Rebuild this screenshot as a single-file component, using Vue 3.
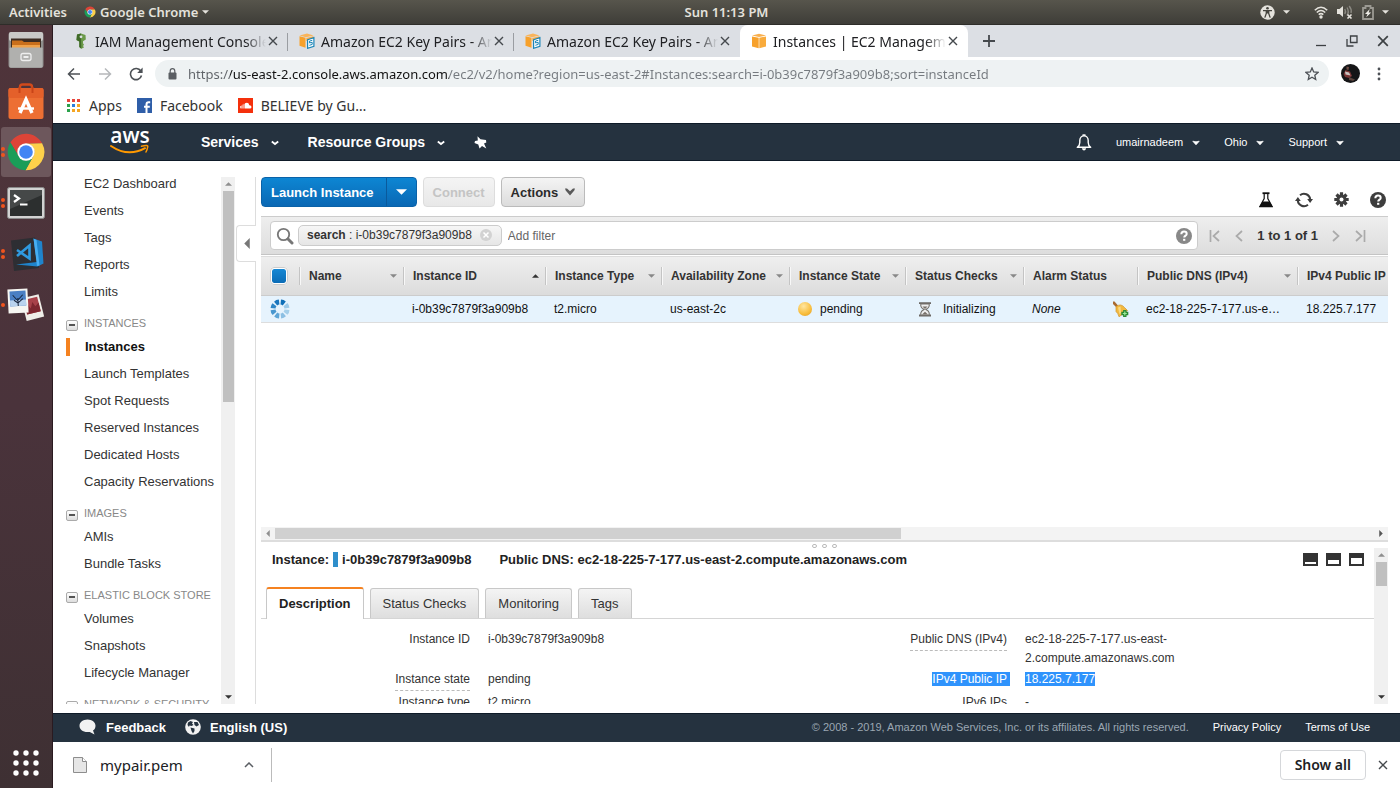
<script setup>
import { ref } from 'vue'

const tabs = [
  { title: 'IAM Management Console', icon: 'key' },
  { title: 'Amazon EC2 Key Pairs - Am', icon: 'docs' },
  { title: 'Amazon EC2 Key Pairs - Am', icon: 'docs' },
  { title: 'Instances | EC2 Management', icon: 'box', active: true }
]

const url = ref('https://us-east-2.console.aws.amazon.com/ec2/v2/home?region=us-east-2#Instances:search=i-0b39c7879f3a909b8;sort=instanceId')

const appColors = ['#e8453c', '#e8453c', '#e8453c', '#2ba24c', '#2a7de1', '#f5a623', '#2ba24c', '#f5a623', '#f5a623']

const groups = [
  { items: ['EC2 Dashboard', 'Events', 'Tags', 'Reports', 'Limits'] },
  { title: 'INSTANCES', items: ['Instances', 'Launch Templates', 'Spot Requests', 'Reserved Instances', 'Dedicated Hosts', 'Capacity Reservations'] },
  { title: 'IMAGES', items: ['AMIs', 'Bundle Tasks'] },
  { title: 'ELASTIC BLOCK STORE', items: ['Volumes', 'Snapshots', 'Lifecycle Manager'] },
  { title: 'NETWORK & SECURITY', items: [] }
]

const columns = [
  { key: 'name', label: 'Name', sort: 'down' },
  { key: 'id', label: 'Instance ID', sort: 'up' },
  { key: 'type', label: 'Instance Type', sort: 'down' },
  { key: 'zone', label: 'Availability Zone', sort: 'down' },
  { key: 'state', label: 'Instance State', sort: 'down' },
  { key: 'checks', label: 'Status Checks', sort: 'down' },
  { key: 'alarm', label: 'Alarm Status' },
  { key: 'dns', label: 'Public DNS (IPv4)', sort: 'down' },
  { key: 'ip', label: 'IPv4 Public IP' }
]

const spokes = ['#0f6fb8', '#9cc9e8', '#a5cfea', '#8cbfe3', '#5ea5d6', '#4997cf', '#2f86c6', '#1a76bd']
const checked = ref(true)
const filter = ref('')
const detailTabs = ['Description', 'Status Checks', 'Monitoring', 'Tags']
</script>

<template>
  <div class="desktop">
    <svg class="defs" aria-hidden="true">
      <defs>
        <symbol id="chrome" viewBox="0 0 48 48">
          <path fill="#dd4437" d="M24 14 43.3 13.5A22 22 0 0 0 5.3 12.5L15.3 29A10 10 0 0 1 24 14Z" />
          <path fill="#fdd04a" d="M32.7 29 23.4 46A22 22 0 0 0 43.3 13.5L24 14A10 10 0 0 1 32.7 29Z" />
          <path fill="#1a9d58" d="M15.3 29 5.3 12.5A22 22 0 0 0 23.4 46L32.7 29A10 10 0 0 1 15.3 29Z" />
          <circle cx="24" cy="24" r="10.4" fill="#fff" />
          <circle cx="24" cy="24" r="8.2" fill="#4285f4" />
        </symbol>
        <symbol id="close" viewBox="0 0 10 10"><path d="M1 1 9 9M9 1 1 9" stroke="currentColor" stroke-width="1.4" fill="none" /></symbol>
        <symbol id="caret" viewBox="0 0 8 6"><path d="M0.8 1.2Q4 2.4 7.2 1.2L4 4.8Z" fill="currentColor" stroke="currentColor" stroke-width=".8" stroke-linejoin="round" /></symbol>
        <symbol id="chev" viewBox="0 0 8 6"><path d="M0.8 1.500 4 4 7.200 1.500" fill="none" stroke="currentColor" stroke-width="1.800" /></symbol>
        <symbol id="tri-down" viewBox="0 0 8 4"><path d="M0 0H8L4 4Z" fill="currentColor" /></symbol>
        <symbol id="tri-up" viewBox="0 0 8 4"><path d="M0 4H8L4 0Z" fill="currentColor" /></symbol>
        <symbol id="tri-left" viewBox="0 0 4 8"><path d="M4 0V8L0 4Z" fill="currentColor" /></symbol>
        <symbol id="tri-right" viewBox="0 0 4 8"><path d="M0 0V8L4 4Z" fill="currentColor" /></symbol>
        <symbol id="help" viewBox="0 0 16 16">
          <circle cx="8" cy="8" r="8" fill="currentColor" />
          <path d="M5.3 6.2C5.4 4.4 6.5 3.6 8 3.6s2.7 1 2.7 2.3C10.700 7.600 8.200 7.700 8.200 9.600" fill="none" stroke="#fff" stroke-width="2" />
          <rect x="7.100" y="10.800" width="2.200" height="2" fill="#fff" />
        </symbol>
        <symbol id="key" viewBox="0 0 16 16">
          <path fill="#6b9a4a" d="M8 0.500 4 1.500 3.500 7 6.300 8.500V14l2 1.700 2.700-1.200-1-1.600 1-1.200-1-1.400V8.200L12.800 6.500 12.500 2Z" />
          <path fill="#3f6a28" d="M8 0.500 4 1.500 3.500 7 6.300 8.500V14l2 1.700Z" />
          <circle cx="8" cy="3.800" r="1.400" fill="#dcdfe4" />
        </symbol>
        <symbol id="box" viewBox="0 0 16 16">
          <path fill="#f9b04f" d="M1 2.600 8 0.800 15 2.600 8 4Z" />
          <path fill="#f7a12b" d="M1 3.400 7.700 4.700V15.300L1 13.500Z" />
          <path fill="#f9ab3c" d="M15 3.400 8.300 4.700V15.300L15 13.500Z" />
        </symbol>
        <symbol id="docs" viewBox="0 0 16 16">
          <path fill="#f9b45a" d="M0.500 2.600 8 0.500 14.500 2.400 7 4.300Z" />
          <path fill="#f7a12b" d="M0.500 3.300 6.500 4.800V14.800L0.500 12.800Z" />
          <path fill="#f9ab45" d="M7.300 5 14.500 3.200V6L7.300 8Z" />
          <path fill="#fff" stroke="#1b86b8" stroke-width="1.200" d="M8.600 6.800 14.900 4.700V13.400L8.600 15.300Z" />
          <path fill="none" stroke="#1b86b8" stroke-width="1" d="M13.300 7.300 10.500 8.100V9.900L13.200 9.300V11.400L10.400 12.300" />
        </symbol>
      </defs>
    </svg>

    <header class="topbar">
      <div class="topbar-side left">
        <button class="top-btn">Activities</button>
        <button class="top-btn app-btn">
          <svg class="i12"><use href="#chrome" /></svg>Google Chrome
          <svg class="top-tri"><use href="#tri-down" /></svg>
        </button>
      </div>
      <button class="top-btn clock">Sun 11:13 PM</button>
      <div class="topbar-side tray">
        <svg width="15" height="15" viewBox="0 0 15 15"><circle cx="7.500" cy="7.500" r="7.200" fill="#e4e2dc" /><circle cx="7.500" cy="3.200" r="1.300" fill="#45443e" /><path d="M3 5.600H12M7.500 5.500V8.500M6.300 6V8.500L4.800 12.600M8.700 6V8.500L10.200 12.600" stroke="#45443e" stroke-width="1.300" fill="none" /></svg>
        <svg class="top-tri"><use href="#tri-down" /></svg>
        <svg class="wifi" width="14" height="13" viewBox="0 0 14 13"><g fill="none" stroke="#e4e2dc" stroke-width="1.600"><path d="M0.800 4.300Q7-1.800 13.200 4.300" /><path d="M2.800 6.500Q7 2.500 11.200 6.500" /><path d="M4.700 8.600Q7 6.500 9.300 8.600" /></g><circle cx="7" cy="11" r="1.700" fill="#e4e2dc" /></svg>
        <svg class="vol" width="16" height="14" viewBox="0 0 16 14"><path fill="#e4e2dc" d="M0 4H2.500L6 1V12L2.500 9H0Z" /><g fill="none" stroke="#8b8982" stroke-width="1.400"><path d="M7.800 4Q9.300 6.500 7.800 9M10 2.500Q12.500 6.500 10 10.500M12.200 1Q15 4.500 14 8" /></g><path d="M10.500 9.500 14.500 13.500M14.500 9.500 10.500 13.500" stroke="#e4e2dc" stroke-width="1.600" /></svg>
        <svg class="bat" width="12" height="15" viewBox="0 0 12 15"><path fill="none" stroke="#9b9992" stroke-width="1.800" d="M1 3H3.500V1H8.500V3H11V14H1Z" /><path fill="#f0eee8" d="M7.800 4 3 9H5.500L4.200 12.300 9.200 7.600H6.600Z" /></svg>
        <svg class="top-tri"><use href="#tri-down" /></svg>
      </div>
    </header>

    <nav class="launcher" aria-label="Launcher">
      <button class="dock" aria-label="Files">
        <svg width="36" height="38" viewBox="0 0 36 38"><rect x="0.500" y="1" width="35" height="36" rx="3" fill="#8e8e8c" /><rect x="1" y="1" width="34" height="9" rx="2" fill="#c9c9c7" /><rect x="3" y="7.500" width="30" height="10" fill="#3c2c22" /><path fill="#c96f1c" d="M4 9.500H14L16 11H32V17H4Z" /><path fill="#f0a24a" d="M4 14H32V17H4Z" /><rect x="1.500" y="16.500" width="33" height="20" rx="1" fill="#b0b0ae" /><rect x="13" y="22.500" width="10" height="7" rx="2" fill="none" stroke="#eee" stroke-width="1.300" /><rect x="15.500" y="25" width="5" height="2" fill="#eee" /></svg>
      </button>
      <button class="dock" aria-label="Software">
        <svg width="36" height="38" viewBox="0 0 36 38"><path d="M12 11V5Q12 2.500 14.500 2.500H21.500Q24 2.500 24 5V11" fill="none" stroke="#d24a1b" stroke-width="2.400" /><rect x="0.500" y="6" width="35" height="31" rx="2" fill="#ed6f33" /><rect x="0.500" y="6" width="35" height="10" rx="2" fill="#e4602a" /><path d="M11.500 5V11M24.500 5V11" stroke="#c94418" stroke-width="2" /><path d="M12 31 18 17.500 24 31" fill="none" stroke="#fff" stroke-width="3.400" /><path d="M10 26.500H26" stroke="#fff" stroke-width="2.400" /></svg>
      </button>
      <button class="dock current" aria-label="Google Chrome"><span class="pips"><i></i><i></i></span><svg width="40" height="40"><use href="#chrome" /></svg></button>
      <button class="dock" aria-label="Terminal"><span class="pips"><i></i><i></i></span>
        <svg width="38" height="32" viewBox="0 0 38 32"><rect x="0.500" y="0.500" width="37" height="31" rx="2" fill="#d2d2d2" stroke="#8a8a8a" /><rect x="3" y="3" width="32" height="26" fill="#2c2f2f" /><path fill="#454848" d="M3 3H35V8L3 22Z" /><path d="M7 8 12 11.500 7 15" fill="none" stroke="#fff" stroke-width="2.200" /><path d="M13 17.500H20.500" stroke="#fff" stroke-width="2" /></svg>
      </button>
      <button class="dock" aria-label="Visual Studio Code"><span class="pips"><i></i><i></i></span>
        <svg width="36" height="36" viewBox="0 0 36 36"><path fill="#2d2e33" d="M3 4.500 27 1.500 31 32 6 35Z" /><path fill="#1f84cc" d="M25.500 2.500 34 5.500 35.500 27.500 29.500 30.500Z" /><path fill="#1f84cc" d="M8 28.500 29 26 29.500 30.500Z" /><path fill="#47aef2" d="M25.500 2.500 28.500 4 31.500 29.500 29 30Z" /><path fill="none" stroke="#2f9ae0" stroke-width="2.600" d="M9 14 21.500 22.500V9.500L9 20" /></svg>
      </button>
      <button class="dock" aria-label="Photos"><span class="pips"><i></i></span>
        <svg width="38" height="36" viewBox="0 0 38 36"><g transform="rotate(-14 26 22)"><rect x="17" y="9" width="18" height="23" fill="#efeee8" /><rect x="19" y="11" width="14" height="15" fill="#a8424a" /><path fill="#7d2730" d="M19 22 22 17 24 21 27 15 29 20 33 17V26H19Z" /></g><g transform="rotate(-3 11 14)"><rect x="1" y="2" width="20" height="24" fill="#f6f6f2" /><rect x="3" y="4" width="16" height="15" fill="#4a7fc4" /><path fill="#b9d3ee" d="M3 13H19V19H3Z" /><path stroke="#16233a" stroke-width="1" fill="none" d="M11 19V11M11 14 6 8M11 13 16 8M11 16 16 12M11 16 7 13" /></g></svg>
      </button>
      <button class="dock apps" aria-label="Show Applications">
        <svg width="26" height="26" viewBox="0 0 26 26" fill="#fff"><template v-for="r in 3" :key="r"><circle v-for="c in 3" :key="c" :cx="c * 10 - 7" :cy="r * 10 - 7" r="2.700" /></template></svg>
      </button>
    </nav>

    <div class="window">
      <div class="tabstrip">
        <div v-for="(t, n) in tabs" :key="n" class="tab" :class="{ active: t.active }">
          <svg class="i16"><use :href="'#' + t.icon" /></svg>
          <a href="#" class="tab-title">{{ t.title }}</a>
          <button class="x" aria-label="Close tab"><svg class="i10"><use href="#close" /></svg></button>
        </div>
        <button class="x plus" aria-label="New tab"><svg width="12" height="12" viewBox="0 0 12 12"><path d="M6 0V12M0 6H12" stroke="currentColor" stroke-width="1.800" /></svg></button>
        <div class="win-ctl">
          <button aria-label="Minimize"><svg width="12" height="12" viewBox="0 0 12 12"><path d="M1 10.500H11" stroke="currentColor" stroke-width="1.300" /></svg></button>
          <button aria-label="Restore"><svg width="12" height="12" viewBox="0 0 12 12"><path d="M4.500 1H11V7.500H4.500ZM1 4V11H7.500" fill="none" stroke="currentColor" stroke-width="1.300" /></svg></button>
          <button aria-label="Close"><svg class="i12"><use href="#close" /></svg></button>
        </div>
      </div>

      <div class="toolbar">
        <button aria-label="Back"><svg width="14" height="14" viewBox="0 0 14 14"><path d="M13 7H1.500M7 1.500 1.500 7 7 12.500" fill="none" stroke="#4d5156" stroke-width="1.500" /></svg></button>
        <button aria-label="Forward"><svg width="14" height="14" viewBox="0 0 14 14"><path d="M1 7H12.500M7 1.500 12.500 7 7 12.500" fill="none" stroke="#b6b8bb" stroke-width="1.500" /></svg></button>
        <button aria-label="Reload"><svg width="14" height="14" viewBox="0 0 14 14"><path d="M11.800 4A5.600 5.600 0 1 0 12.500 8.500" fill="none" stroke="#4d5156" stroke-width="1.600" /><path fill="#4d5156" d="M13.600 0.500V6H8.200Z" /></svg></button>
        <div class="omnibox">
          <svg width="9" height="12" viewBox="0 0 9 12"><rect x="0.500" y="4.500" width="8" height="7" rx="1" fill="#5a5e63" /><path d="M2.200 5V3A2.300 2.300 0 0 1 6.800 3V5" fill="none" stroke="#5a5e63" stroke-width="1.200" /></svg>
          <input v-model="url" class="url" aria-label="Address" spellcheck="false">
          <button aria-label="Bookmark this page"><svg width="14" height="14" viewBox="0 0 14 14"><path d="M7 1 8.700 5 13 5.400 9.800 8.200 10.700 12.500 7 10.200 3.300 12.500 4.200 8.200 1 5.400 5.300 5Z" fill="none" stroke="#4d5156" stroke-width="1.300" /></svg></button>
        </div>
        <button class="avatar" aria-label="Profile"><svg width="19" height="19" viewBox="0 0 19 19"><circle cx="9.500" cy="9.500" r="9.500" fill="#151517" /><path fill="#6e4a42" d="M5.500 2.500 8 3 7.500 6 5.500 5.500Z" /><path fill="#7a3434" d="M2.500 10 4.500 6 9 7.500 11 12 8 14 4 13Z" /><path fill="#c9c3c0" d="M4 7.500 8 8.500 9.500 11.500 4.500 10.500Z" /><path fill="#59423c" d="M8 13 14 15.500 12 17 8 16Z" /></svg></button>
        <button aria-label="Menu"><svg width="4" height="14" viewBox="0 0 4 14" fill="#4d5156"><circle cx="2" cy="2" r="1.400" /><circle cx="2" cy="7" r="1.400" /><circle cx="2" cy="12" r="1.400" /></svg></button>
      </div>

      <div class="bookmarks">
        <a href="#"><svg width="14" height="14" viewBox="0 0 14 14"><rect v-for="(c, n) in appColors" :key="n" :x="(n % 3) * 5" :y="Math.floor(n / 3) * 5" width="3" height="3" :fill="c" /></svg>Apps</a>
        <a href="#"><svg width="15" height="15" viewBox="0 0 15 15"><rect width="15" height="15" fill="#2f5ea8" /><path d="M9.500 15V6.500Q9.500 4.300 11.700 4.300H13.200M7 8.700H12.800" fill="none" stroke="#fff" stroke-width="2" /></svg>Facebook</a>
        <a href="#"><svg width="15" height="15" viewBox="0 0 15 15"><rect width="15" height="15" fill="#f4300c" /><path fill="#fff" d="M7 10.500V5.300Q10.600 3.800 11.300 7.300 13.500 7.200 13.500 9 13.400 10.500 12 10.500Z" /><path stroke="#fff" stroke-width=".8" d="M6.200 10.500V5.800M5 10.500V6.500M3.800 10.500V7.500M2.600 10.300V8" /></svg>BELIEVE by Gu…</a>
      </div>

      <div class="awsnav">
        <a href="#" class="logo">aws<svg width="40" height="11" viewBox="0 0 40 11"><path d="M1 2Q18 13.500 35 4.200" fill="none" stroke="#f90" stroke-width="2" stroke-linecap="round" /><path d="M31.500 2.300Q38.500 0.500 37.700 3 37.300 5.500 36 8" fill="none" stroke="#f90" stroke-width="1.500" stroke-linecap="round" /></svg></a>
        <button class="nav-main">Services<svg class="caret"><use href="#chev" /></svg></button>
        <button class="nav-main">Resource Groups<svg class="caret"><use href="#chev" /></svg></button>
        <button class="pin" aria-label="Pin"><svg width="13" height="13" viewBox="0 0 13 13"><path fill="#fff" d="M3.500 0.300 6.500 3.300 12 4 12.300 6.500 10 7.500 12.300 12.500 8 10 5.500 12.500 4.300 8.500 0.500 7 1 5 3.800 4.500Z" /></svg></button>
        <button class="bell" aria-label="Notifications"><svg width="16" height="17" viewBox="0 0 16 17"><path d="M1.300 13.300H14.700Q12.200 11.700 12.200 8.500V6.500A4.200 4.700 0 0 0 3.800 6.500V8.500Q3.800 11.700 1.300 13.300Z" fill="none" stroke="#fff" stroke-width="1.400" stroke-linejoin="round" /><path d="M6.500 1H9.500" stroke="#fff" stroke-width="1.400" /><path d="M5.800 14.200H10.200Q9.500 16.500 8 16.500T5.800 14.200Z" fill="#fff" /></svg></button>
        <button>umairnadeem<svg class="caret"><use href="#caret" /></svg></button>
        <button>Ohio<svg class="caret"><use href="#caret" /></svg></button>
        <button>Support<svg class="caret"><use href="#caret" /></svg></button>
      </div>

      <div class="console">
        <aside class="side">
          <nav class="side-list" aria-label="EC2">
            <section v-for="(g, n) in groups" :key="n">
              <h3 v-if="g.title"><button aria-label="Collapse"><span></span></button>{{ g.title }}</h3>
              <ul v-if="g.items.length">
                <li v-for="it in g.items" :key="it" :class="{ here: it === 'Instances' }"><a href="#">{{ it }}</a></li>
              </ul>
            </section>
          </nav>
          <div class="vbar"><svg class="tri-v dim"><use href="#tri-up" /></svg><span class="thumb side-thumb"></span><svg class="tri-v end"><use href="#tri-down" /></svg></div>
          <div class="divider"><button class="handle" aria-label="Hide navigation"><svg width="6" height="11"><use href="#tri-left" /></svg></button></div>
        </aside>

        <main class="main">
          <div class="actions">
            <div class="split"><button>Launch Instance</button><button class="drop" aria-label="More launch options"><svg width="11" height="6"><use href="#tri-down" /></svg></button></div>
            <button class="btn" disabled>Connect</button>
            <button class="btn act">Actions<svg width="10" height="8" viewBox="0 0 10 8"><path fill="#5a5a5a" d="M0 0.500 2 0.500 5 3.300 8 0.500 10 0.500 9.300 2.500 5 7.500 0.700 2.500Z" /></svg></button>
            <div class="tools">
              <button aria-label="Experiments"><svg width="16" height="16" viewBox="0 0 16 16"><path d="M4.500 1.200H11.500" stroke="#111" stroke-width="1.800" /><path d="M6.200 1.500V6.500L2 14.300H14L9.800 6.500V1.500" fill="none" stroke="#111" stroke-width="1.200" /><path fill="#111" d="M4.500 9.500H11.500L15 15.300H1Z" /></svg></button>
              <button aria-label="Refresh"><svg width="18" height="16" viewBox="0 0 18 16"><path d="M5 3.200A6.200 6.200 0 0 1 15.200 7.500M13 12.800A6.200 6.200 0 0 1 2.800 8.500" fill="none" stroke="#3d3d3d" stroke-width="2" /><path fill="#3d3d3d" d="M0 9H5.800L2.900 5ZM18 7H12.200L15.100 11Z" /></svg></button>
              <button aria-label="Settings"><svg width="15" height="15" viewBox="0 0 15 15"><g stroke="#3d3d3d" stroke-width="3.200"><path d="M7.500 0.300V14.700M0.300 7.500H14.700M2.500 2.500 12.500 12.500M12.500 2.500 2.500 12.500" /></g><circle cx="7.500" cy="7.500" r="5" fill="#3d3d3d" /><circle cx="7.500" cy="7.500" r="2" fill="#fff" /></svg></button>
              <button aria-label="Help"><svg class="i16 dark"><use href="#help" /></svg></button>
            </div>
          </div>

          <div class="filterbar">
            <div class="search">
              <svg width="18" height="18" viewBox="0 0 18 18"><circle cx="7.500" cy="7.500" r="5.700" fill="none" stroke="#777" stroke-width="1.800" /><path d="M12 12 16 16" stroke="#777" stroke-width="3" stroke-linecap="round" /></svg>
              <span class="chip"><span><b>search</b> : i-0b39c7879f3a909b8</span><button aria-label="Remove filter"><svg width="12" height="12" viewBox="0 0 12 12"><circle cx="6" cy="6" r="6" fill="#d2d2d2" /><path d="M3.500 3.500 8.500 8.500M8.500 3.500 3.500 8.500" stroke="#fff" stroke-width="1.500" /></svg></button></span>
              <input v-model="filter" placeholder="Add filter" aria-label="Add filter">
              <button aria-label="Filter help"><svg class="i16 grey"><use href="#help" /></svg></button>
            </div>
            <div class="pager">
              <button aria-label="First page"><svg width="12" height="12" viewBox="0 0 12 12"><path d="M1.500 0V12M10 1 4.500 6 10 11" fill="none" stroke="#aaa" stroke-width="1.700" /></svg></button>
              <button aria-label="Previous page"><svg width="8" height="12" viewBox="0 0 8 12"><path d="M7 1 1.500 6 7 11" fill="none" stroke="#aaa" stroke-width="1.700" /></svg></button>
              <b>1 to 1 of 1</b>
              <button aria-label="Next page"><svg width="8" height="12" viewBox="0 0 8 12"><path d="M1 1 6.500 6 1 11" fill="none" stroke="#aaa" stroke-width="1.700" /></svg></button>
              <button aria-label="Last page"><svg width="12" height="12" viewBox="0 0 12 12"><path d="M10.500 0V12M2 1 7.500 6 2 11" fill="none" stroke="#aaa" stroke-width="1.700" /></svg></button>
            </div>
          </div>

          <div class="grid-area">
            <table>
              <colgroup><col class="c-check"><col v-for="c in columns" :key="c.key" :class="'c-' + c.key"></colgroup>
              <thead>
                <tr>
                  <th class="check"><input v-model="checked" type="checkbox" aria-label="Select all"></th>
                  <th v-for="c in columns" :key="c.key"><div class="th">{{ c.label }}<svg v-if="c.sort" :class="c.sort"><use :href="'#tri-' + c.sort" /></svg></div></th>
                </tr>
              </thead>
              <tbody>
                <tr>
                  <td class="check"><svg width="20" height="20" viewBox="0 0 20 20"><path v-for="(c, n) in spokes" :key="n" :fill="c" :transform="'rotate(' + (n * 45 + 22) + ' 10 10)'" d="M7.400 0.900Q10-0.200 12.600 0.900L11.200 5.700Q10 5.300 8.800 5.700Z" /></svg></td>
                  <td></td>
                  <td>i-0b39c7879f3a909b8</td>
                  <td>t2.micro</td>
                  <td>us-east-2c</td>
                  <td><div class="cell"><span class="dot"></span>pending</div></td>
                  <td><div class="cell wait"><svg width="12" height="15" viewBox="0 0 12 15"><path d="M0 1.200H12M0 13.500H12" stroke="#6a6763" stroke-width="1.800" /><path d="M1.800 2V4Q2 6 5 7.500 2 9 1.800 11V13H10.200V11Q10 9 7 7.500 10 6 10.200 4V2Z" fill="#eee" stroke="#76736f" stroke-width="1.100" /><path fill="#77706a" d="M3.500 4.500H8.500L6 7ZM3 12.500 6 9.800 9 12.500Z" /></svg>Initializing</div></td>
                  <td><div class="cell alarm"><i>None</i><svg width="17" height="17" viewBox="0 0 17 17"><path fill="#a86a30" d="M1 0.500 2.500 0.500 6 4.500 4.500 6.500 1 3Z" /><path fill="#f2b93f" stroke="#cf922a" stroke-width=".7" d="M4 5.500Q9 2 12.500 6.500L15.500 9.500 7 15.800Q6 12 4 10.500Z" /><path fill="#f9d985" d="M6 6.500 8.500 5.500 9 12 7.500 13Z" /><path d="M12.800 9V16M9.300 12.500H16.300" stroke="#2a8a34" stroke-width="3.400" /><path d="M12.800 10.500V14.500M10.800 12.500H14.800" stroke="#9be898" stroke-width="1.200" /></svg></div></td>
                  <td>ec2-18-225-7-177.us-e…</td>
                  <td>18.225.7.177</td>
                </tr>
              </tbody>
            </table>
          </div>

          <div class="hbar"><svg class="tri-h dim"><use href="#tri-left" /></svg><span></span><svg class="tri-h end"><use href="#tri-right" /></svg></div>

          <section class="detail">
            <div class="grip"><i></i><i></i><i></i></div>
            <div class="detail-body">
              <div class="detail-head">
                <b class="inst">Instance: <span></span> i-0b39c7879f3a909b8</b>
                <b>Public DNS: ec2-18-225-7-177.us-east-2.compute.amazonaws.com</b>
                <div class="panes"><button class="p1" aria-label="Small pane"></button><button class="p2" aria-label="Medium pane"></button><button class="p3" aria-label="Large pane"></button></div>
              </div>
              <div class="dtabs">
                <button v-for="(t, n) in detailTabs" :key="t" :class="{ on: n === 0 }">{{ t }}</button>
              </div>
              <div class="props">
                <dl>
                  <div class="tall"><dt><span>Instance ID</span></dt><dd>i-0b39c7879f3a909b8</dd></div>
                  <div><dt><span class="tip">Instance state</span></dt><dd>pending</dd></div>
                  <div><dt><span>Instance type</span></dt><dd>t2.micro</dd></div>
                </dl>
                <dl>
                  <div class="tall"><dt><span class="tip">Public DNS (IPv4)</span></dt><dd>ec2-18-225-7-177.us-east-<wbr>2.compute.amazonaws.com</dd></div>
                  <div><dt class="picked"><mark>IPv4 Public IP</mark></dt><dd><mark>18.225.7.177</mark></dd></div>
                  <div><dt><span>IPv6 IPs</span></dt><dd>-</dd></div>
                </dl>
              </div>
            </div>
            <div class="vbar"><svg class="tri-v dim"><use href="#tri-up" /></svg><span class="thumb detail-thumb"></span><svg class="tri-v end"><use href="#tri-down" /></svg></div>
          </section>
        </main>
      </div>

      <footer class="foot">
        <button><svg width="18" height="16" viewBox="0 0 18 16"><path fill="#f2f2f2" d="M8.500 0.500C13 0.500 16.500 3.300 16.500 6.700 16.500 9 15.500 10.500 14 11.600L15.500 15.500 10.800 12.900C4.500 14 0.500 10.500 0.500 6.700 0.500 3.300 4 0.500 8.500 0.500Z" /></svg>Feedback</button>
        <button class="lang"><svg width="16" height="16" viewBox="0 0 16 16"><circle cx="8" cy="8" r="7.800" fill="#f2f2f2" /><path fill="#25323f" d="M3 3.500 5.500 2 8 3 7 4.500 8.500 6 6.500 7 4.500 6.500 4 8 2.500 6ZM9 3 12.500 3 14 6 11.500 7.500 9.500 6ZM5.500 8.500 9.500 9.500 9.500 12 8 14.500 6.500 12Z" /></svg>English (US)</button>
        <span class="copy">© 2008 - 2019, Amazon Web Services, Inc. or its affiliates. All rights reserved.</span>
        <a href="#">Privacy Policy</a>
        <a href="#">Terms of Use</a>
      </footer>

      <div class="downloads">
        <button class="dl-item">
          <svg width="14" height="16" viewBox="0 0 14 16"><path fill="#e6e6e6" stroke="#8d8d8d" d="M0.500 0.500H9.500L13.500 4.500V15.500H0.500Z" /><path fill="#fff" stroke="#8d8d8d" d="M9.500 0.500V4.500H13.500" /></svg>
          <span>mypair.pem</span>
          <svg width="10" height="6" viewBox="0 0 10 6"><path d="M1 5 5 1 9 5" fill="none" stroke="#5a5e63" stroke-width="1.500" /></svg>
        </button>
        <button class="show">Show all</button>
        <button class="x" aria-label="Close downloads"><svg class="i10"><use href="#close" /></svg></button>
      </div>
    </div>
  </div>
</template>

<style>
body { margin: 0; background: #fff; }
</style>

<style scoped>
* { box-sizing: border-box; }
button { border: 0; padding: 0; margin: 0; background: none; font: inherit; color: inherit; display: flex; align-items: center; }
a { color: inherit; text-decoration: none; }
ul, dl, dd, h3 { margin: 0; padding: 0; list-style: none; }
input { font: inherit; color: inherit; border: 0; background: none; padding: 0; margin: 0; outline: 0; min-width: 0; }
svg { flex: none; display: block; }
.defs { position: absolute; width: 0; height: 0; }
.i10 { width: 10px; height: 10px; }
.i12 { width: 12px; height: 12px; }
.i16 { width: 16px; height: 16px; }
.dark { color: #3d3d3d; }
.grey { color: #888; }

.desktop { display: grid; grid-template-columns: 53px minmax(0, 1fr); grid-template-rows: 25px minmax(0, 1fr); height: 100vh; overflow: hidden; font-family: "Noto Sans", "Open Sans", sans-serif; font-size: 14px; color: #333; }

.topbar { grid-column: 1 / 3; display: flex; align-items: center; justify-content: space-between; background: linear-gradient(#57554c, #3e3d38); border-bottom: 1px solid #2e2d29; color: #e4e2dc; font-size: 13px; font-weight: 600; }
.topbar-side { flex: 1 1 0; display: flex; align-items: center; padding: 0 11px 0 9px; }
.topbar-side.left { flex-basis: 73px; }
.top-btn { white-space: nowrap; }
.app-btn { margin-left: 17px; gap: 4px; }
.top-tri { width: 7px; height: 4px; }
.tray { justify-content: flex-end; }
.tray .top-tri { margin-left: 8px; }
.wifi { margin-left: 24px; }
.vol { margin-left: 9px; }
.bat { margin-left: 9px; }

.launcher { background: linear-gradient(#4f343a, #4a333b 50%, #3e3033); border-right: 1px solid #2a1a20; display: flex; flex-direction: column; gap: 1px; }
.dock { position: relative; height: 50px; justify-content: center; margin: 0 1px; border-radius: 3px; }
.current { background: #6d575c; }
.apps { margin-top: auto; }
.pips { position: absolute; left: 0; display: flex; flex-direction: column; gap: 2px; }
.pips i { width: 4px; height: 4px; border-radius: 50%; background: #f0541e; }

.window { display: flex; flex-direction: column; min-width: 0; min-height: 0; background: #fff; }
.tabstrip { display: flex; height: 32px; background: #dcdfe4; padding-left: 9px; color: #202124; }
.tab { position: relative; display: flex; align-items: center; width: 226px; padding: 0 10px 0 11px; border-radius: 8px 8px 0 0; }
.tab:nth-child(-n+2)::after { content: ""; position: absolute; right: 0; top: 8px; height: 18px; border-right: 1px solid #9a9da2; }
.tab.active { width: 228px; background: #fff; }
.tab-title { flex: 1; margin-left: 6px; overflow: hidden; white-space: nowrap; -webkit-mask-image: linear-gradient(90deg, #000 88%, transparent); mask-image: linear-gradient(90deg, #000 88%, transparent); }
.x { color: #45494d; margin-left: 2px; }
.plus { margin-left: 15px; }
.win-ctl { display: flex; margin-left: auto; gap: 19px; padding-right: 11px; color: #3c4043; }

.toolbar { display: flex; align-items: center; height: 33px; padding: 0 19px 0 14px; gap: 17px; }
.omnibox { flex: 1; display: flex; align-items: center; height: 27px; margin-left: -5px; padding: 0 10px 0 13px; border-radius: 14px; background: #eef2f3; }
.url { flex: 1; margin: 0 11px; font-size: 13px; color: transparent; background: linear-gradient(90deg, #5f6368 42px, #111 42px 261px, #757a7f 261px); -webkit-background-clip: text; background-clip: text; }
.avatar { margin-left: -5px; }

.bookmarks { display: flex; align-items: center; gap: 15px; height: 33px; padding: 0 14px 2px; }
.bookmarks a { display: flex; align-items: center; gap: 8px; }

.awsnav { display: flex; align-items: center; height: 38px; background: #25323f; border: solid #0e1a28; border-width: 1px 0; color: #fff; font-family: "Liberation Sans", Arial, sans-serif; font-size: 11px; padding-right: 56px; }
.awsnav button { gap: 9px; margin-left: 24px; }
.caret { width: 8px; height: 6px; margin-top: 2px; }
.logo { display: flex; flex-direction: column; align-items: center; margin: 0 51px 0 57px; font: 600 21px/17px "Open Sans", sans-serif; padding-bottom: 2px; }
.awsnav .nav-main { font-size: 14px; font-weight: 700; gap: 12px; margin-left: 0; margin-right: 29px; }
.awsnav .pin { margin-left: 0; }
.awsnav .bell { margin-left: auto; }

.console { flex: 1; min-height: 0; display: flex; gap: 5px; padding: 16px 12px 9px 0; font-family: "Liberation Sans", Arial, sans-serif; font-size: 12px; color: #333; }
.side { display: flex; width: 203px; flex: none; }
.side-list { flex: 1; overflow: hidden; margin-top: -7px; white-space: nowrap; font-size: 13px; }
.side-list li { line-height: 27px; padding-left: 31px; }
.side-list .here { font-weight: 700; color: #111; display: flex; align-items: center; padding-left: 13px; }
.here::before { content: ""; width: 4px; height: 18px; background: #f58220; margin-right: 15px; }
.side-list h3 { display: flex; align-items: center; margin: 9px 0 0 13px; font-size: 11px; line-height: 19px; font-weight: 400; color: #888; }
.side-list h3 button { width: 12px; height: 11px; margin: 3px 6px 0 0; border: 1px solid #aaa; border-radius: 2px; justify-content: center; background: linear-gradient(#fff, #ddd); }
.side-list h3 span { width: 6px; height: 2px; background: #555; }
.vbar { width: 14px; flex: none; display: flex; flex-direction: column; align-items: center; background: #f0f0f0; }
.tri-v { width: 7px; height: 4px; margin: 5px 0; color: #333; }
.vbar .dim, .hbar .dim { color: #8f8f8f; }
.vbar .end { margin-top: auto; }
.thumb { width: 11px; background: #c0c0c0; }
.side-thumb { height: 40%; }
.detail-thumb { height: 24px; }
.divider { width: 21px; border-right: 1px solid #ddd; display: flex; }
.handle { width: 20px; height: 37px; margin: 48px -1px 0 auto; padding-left: 7px; border: 1px solid #ddd; border-right: 0; border-radius: 4px 0 0 4px; background: #fff; color: #777; }

.main { flex: 1; min-width: 0; display: flex; flex-direction: column; }
.actions { display: flex; gap: 6px; margin-bottom: 9px; height: 30px; font-size: 13px; font-weight: 700; }
.split { display: flex; border: 1px solid #0a62a8; border-radius: 4px; color: #fff; background: linear-gradient(#0d86d3, #0a68b4); }
.split button { padding: 0 12px 0 9px; }
.split .drop { border-left: 1px solid #0a5a9c; padding: 0 9px; }
.btn { padding: 0 9px; border: 1px solid #bbb; border-radius: 4px; background: linear-gradient(#f4f4f4, #dcdcdc); gap: 7px; color: #2b2b2b; }
.btn:disabled { color: #c4c4c4; border-color: #ddd; background: linear-gradient(#f4f4f4, #e8e8e8); }
.tools { margin-left: auto; display: flex; gap: 21px; padding-top: 15px; margin-right: 2px; }

.filterbar { display: flex; align-items: center; height: 39px; padding-left: 9px; border-top: 1px solid #ccc; border-bottom: 1px solid #c4c4c4; background: linear-gradient(#eee, #ddd); }
.search { flex: 1; display: flex; align-items: center; height: 29px; padding: 0 5px; border: 1px solid #ccc; border-radius: 4px; background: #fff; }
.chip { display: flex; align-items: center; height: 21px; margin: 0 6px 0 4px; padding: 0 9px 1px 8px; gap: 8px; border: 1px solid #ccc; border-radius: 5px; background: linear-gradient(#f6f6f6, #e6e6e6); white-space: nowrap; }
.search input { flex: 1; }
.search input::placeholder { color: #666; opacity: 1; }
.pager { display: flex; align-items: center; gap: 14px; padding: 0 22px 0 11px; font-size: 13px; }

.grid-area { flex: 1; min-height: 0; overflow: hidden; }
table { width: 100%; table-layout: fixed; border-collapse: collapse; }
.c-check { width: 38px; }
.c-name { width: 104px; }
.c-id { width: 142px; }
.c-type { width: 116px; }
.c-zone { width: 128px; }
.c-state { width: 116px; }
.c-checks { width: 118px; }
.c-alarm { width: 114px; }
.c-dns { width: 160px; }
th { height: 40px; padding: 0; text-align: left; white-space: nowrap; overflow: hidden; }
thead tr { background: linear-gradient(#efefef, #dcdcdc); border-bottom: 1px solid #ccc; border-top: 1px solid #fff; }
.th { display: flex; align-items: center; justify-content: space-between; height: 18px; padding: 0 6px 0 9px; border-left: 1px solid #c4c4c4; box-shadow: inset 1px 0 #f8f8f8; }
.th svg { width: 7px; height: 4px; color: #888; }
.th .up { color: #333; }
td { height: 27px; padding: 0 0 0 9px; color: #111; white-space: nowrap; overflow: hidden; text-overflow: ellipsis; }
tbody tr { background: #e6f3fd; border-bottom: 1px solid #ddd; }
.check, td.check { padding: 0 0 0 9px; }
input[type="checkbox"] { appearance: none; display: block; width: 18px; height: 18px; border: 2px solid #fff; outline: 1px solid #ccc; outline-offset: -1px; border-radius: 4px; background: #fff; }
input[type="checkbox"]:checked { background: linear-gradient(#1788d4, #0b6cb6); background-clip: padding-box; }
.cell { display: flex; align-items: center; gap: 8px; }
.dot { width: 14px; height: 14px; border-radius: 50%; background: radial-gradient(circle at 40% 30%, #ffe6a0, #f8bd3c 60%, #dc9620); }
.wait { padding-left: 5px; gap: 12px; }
.alarm { justify-content: space-between; padding-right: 8px; }

.hbar { display: flex; align-items: center; height: 13px; padding: 0 5px; background: #f3f3f3; }
.hbar span { width: 56%; height: 11px; margin-left: 5px; background: #d0d0d0; }
.tri-h { width: 4px; height: 7px; color: #555; }
.hbar .end { margin-left: auto; }

.detail { position: relative; display: flex; height: 164px; flex: none; border-top: 2px solid #ddd; }
.grip { position: absolute; top: 2px; left: 0; right: 0; display: flex; justify-content: center; gap: 5px; }
.grip i { width: 5px; height: 4px; border: 1px solid #bbb; border-radius: 2px; }
.detail-body { flex: 1; min-width: 0; overflow: hidden; }
.detail .vbar { margin-top: 6px; }
.detail-head { display: flex; align-items: center; gap: 28px; height: 34px; padding: 0 10px 0 11px; font-size: 13px; color: #222; }
.inst { display: flex; gap: 4px; align-items: center; }
.inst span { width: 5px; height: 15px; background: #2f8fcb; }
.panes { margin-left: auto; display: flex; gap: 8px; }
.panes button { width: 15px; height: 13px; border: 2px solid #333; background: #fff; }
.panes .p1 { border-top-width: 9px; }
.panes .p2 { border-top-width: 7px; }
.panes .p3 { border-top-width: 5px; }
.dtabs { display: flex; align-items: flex-end; gap: 6px; margin-top: 10px; height: 33px; padding-left: 5px; border-bottom: 1px solid #d5d5d5; font-size: 13px; }
.dtabs button { height: 30px; padding: 0 12px; border: 1px solid #c8c8c8; border-bottom: 0; border-radius: 3px 3px 0 0; background: linear-gradient(#f4f4f4, #dedede); white-space: nowrap; }
.dtabs .on { height: 32px; margin-bottom: -1px; padding-bottom: 2px; border-top: 2px solid #f58220; background: #fff; font-weight: 700; color: #222; }
.props { display: grid; grid-template-columns: 1fr 1fr; padding: 11px 39px 0 0; }
dl > div { display: grid; grid-template-columns: 209px minmax(0, 170px); gap: 18px; min-height: 23px; line-height: 19px; }
dl .tall { min-height: 40px; }
dt { text-align: right; }
.tip { display: inline-block; height: 21px; border-bottom: 1px dashed #bbb; }
mark { background: #2f93fc; color: #fff; }
.picked mark { padding-right: 3px; margin-right: -3px; }

.foot { display: flex; align-items: center; height: 29px; padding: 0 30px 2px 26px; background: #25323f; border-top: 1px solid #0e1a28; color: #fff; font-family: "Liberation Sans", Arial, sans-serif; font-size: 11px; gap: 24px; }
.foot button { gap: 9px; font-size: 13px; font-weight: 700; }
.foot .lang { margin-left: -5px; }
.copy { margin-left: auto; color: #9ba7b2; white-space: nowrap; }

.downloads { display: flex; align-items: center; height: 46px; padding-right: 12px; color: #202124; }
.dl-item { width: 219px; height: 34px; padding: 0 17px 0 20px; border-right: 1px solid #bbb; }
.dl-item span { flex: 1; text-align: left; margin-left: 13px; font-size: 15px; }
.show { margin-left: auto; height: 30px; padding: 0 14px 2px; border: 1px solid #d5d7da; border-radius: 4px; font-weight: 600; }
.downloads .x { margin-left: 12px; }
</style>
